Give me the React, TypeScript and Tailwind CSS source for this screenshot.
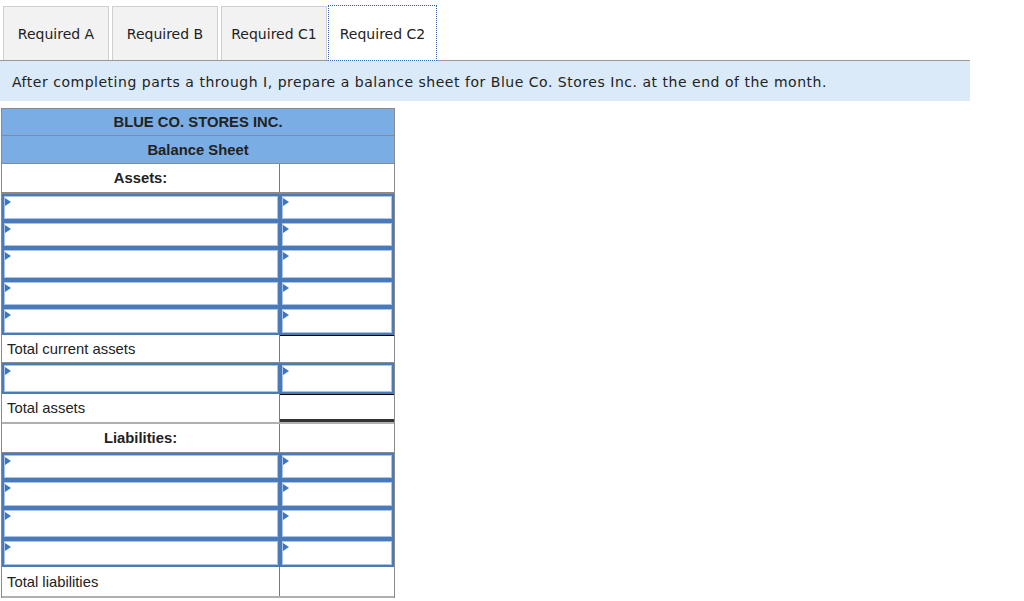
import React from "react";

const verdana = { fontFamily: "Verdana, 'DejaVu Sans', sans-serif" } as const;

function Tri() {
  return (
    <svg className="absolute left-[1px] top-[2px]" width="6" height="8" viewBox="0 0 6 8">
      <polygon points="0,0 6,4 0,8" fill="#3b78c4" />
    </svg>
  );
}

function InputCell({ className }: { className: string }) {
  return (
    <div className={`relative ${className} border-2 border-[#4a7ab8] bg-white`}>
      <div className="h-full w-full border border-[#a9c4e6]" />
      <Tri />
    </div>
  );
}

function InputRow({ h }: { h: string }) {
  return (
    <div className={`flex ${h}`}>
      <InputCell className="w-[278px]" />
      <InputCell className="flex-1" />
    </div>
  );
}

function TextRow({
  h,
  label,
  bold,
  right,
  bottom,
}: {
  h: string;
  label: string;
  bold?: boolean;
  right?: React.ReactNode;
  bottom?: string;
}) {
  return (
    <div className={`flex ${h} ${bottom ?? "border-b border-[#8a8a8a]"}`}>
      <div
        className={`w-[278px] border-r border-[#7a7a7a] flex items-center text-[14.8px] text-[#222] pt-[1px] ${
          bold ? "justify-center font-bold" : "pl-[5px]"
        }`}
      >
        {label}
      </div>
      <div className="flex-1">{right}</div>
    </div>
  );
}

export default function App() {
  const tabs = ["Required A", "Required B", "Required C1", "Required C2"];
  return (
    <div className="w-[1024px] h-[601px] bg-white overflow-hidden relative">
      {/* Tabs */}
      <div className="flex items-end pl-[3px] pt-[5px] gap-[3px] h-[60px]" style={verdana}>
        {tabs.map((t, i) =>
          i === 3 ? (
            <div
              key={t}
              className="h-[56px] w-[109px] -ml-[2px] -mb-[1px] border border-dotted border-[#2f69b5] bg-white flex items-center justify-center text-[14px] text-[#222] pt-[2px] relative z-10"
            >
              {t}
            </div>
          ) : (
            <div
              key={t}
              className="h-[54px] w-[106px] border border-[#cfcfcf] border-b-0 bg-[#f2f2f2] flex items-center justify-center text-[14px] text-[#222] pt-[2px]"
            >
              {t}
            </div>
          )
        )}
      </div>
      <div className="w-[970px] border-t border-[#999]" />
      <div
        className="w-[970px] h-[40px] bg-[#dbeaf8] flex items-center pl-[12px] pt-[2px] text-[14px] tracking-[0.52px] text-[#222]"
        style={verdana}
      >
        After completing parts a through I, prepare a balance sheet for Blue Co. Stores Inc. at the end of the month.
      </div>

      {/* Table */}
      <div
        className="ml-[1px] mt-[7px] w-[394px] border border-[#8a8a8a] border-b-0"
        style={{ fontFamily: "Arial, 'Liberation Sans', sans-serif" }}
      >
        <div className="h-[27px] bg-[#7aade3] border-b border-[#8a8a8a] flex items-center justify-center font-bold text-[14.8px] text-[#222] pt-[1px]">
          BLUE CO. STORES INC.
        </div>
        <div className="h-[28px] bg-[#7aade3] border-b border-[#8a8a8a] flex items-center justify-center font-bold text-[14.8px] text-[#222] pt-[1px]">
          Balance Sheet
        </div>
        <TextRow h="h-[30px]" label="Assets:" bold bottom="border-b-2 border-[#8a8a8a]" />
        <InputRow h="h-[27px]" />
        <InputRow h="h-[27px]" />
        <InputRow h="h-[32px]" />
        <InputRow h="h-[27px]" />
        <InputRow h="h-[28px]" />
        <TextRow
          h="h-[28px]"
          label="Total current assets"
          right={<div className="h-full border-t border-black" />}
        />
        <InputRow h="h-[31px]" />
        <TextRow
          h="h-[30px]"
          label="Total assets"
          bottom="border-b-2 border-[#b0b0b0]"
          right={<div className="h-full border-t border-black border-b-[3px] border-b-[#333]" />}
        />
        <TextRow h="h-[29px]" label="Liabilities:" bold />
        <InputRow h="h-[27px]" />
        <InputRow h="h-[28px]" />
        <InputRow h="h-[31px]" />
        <InputRow h="h-[28px]" />
        <TextRow
          h="h-[31px]"
          label="Total liabilities"
          bottom="border-b-2 border-[#b0b0b0]"
          right={<div className="h-full" />}
        />
      </div>
    </div>
  );
}
